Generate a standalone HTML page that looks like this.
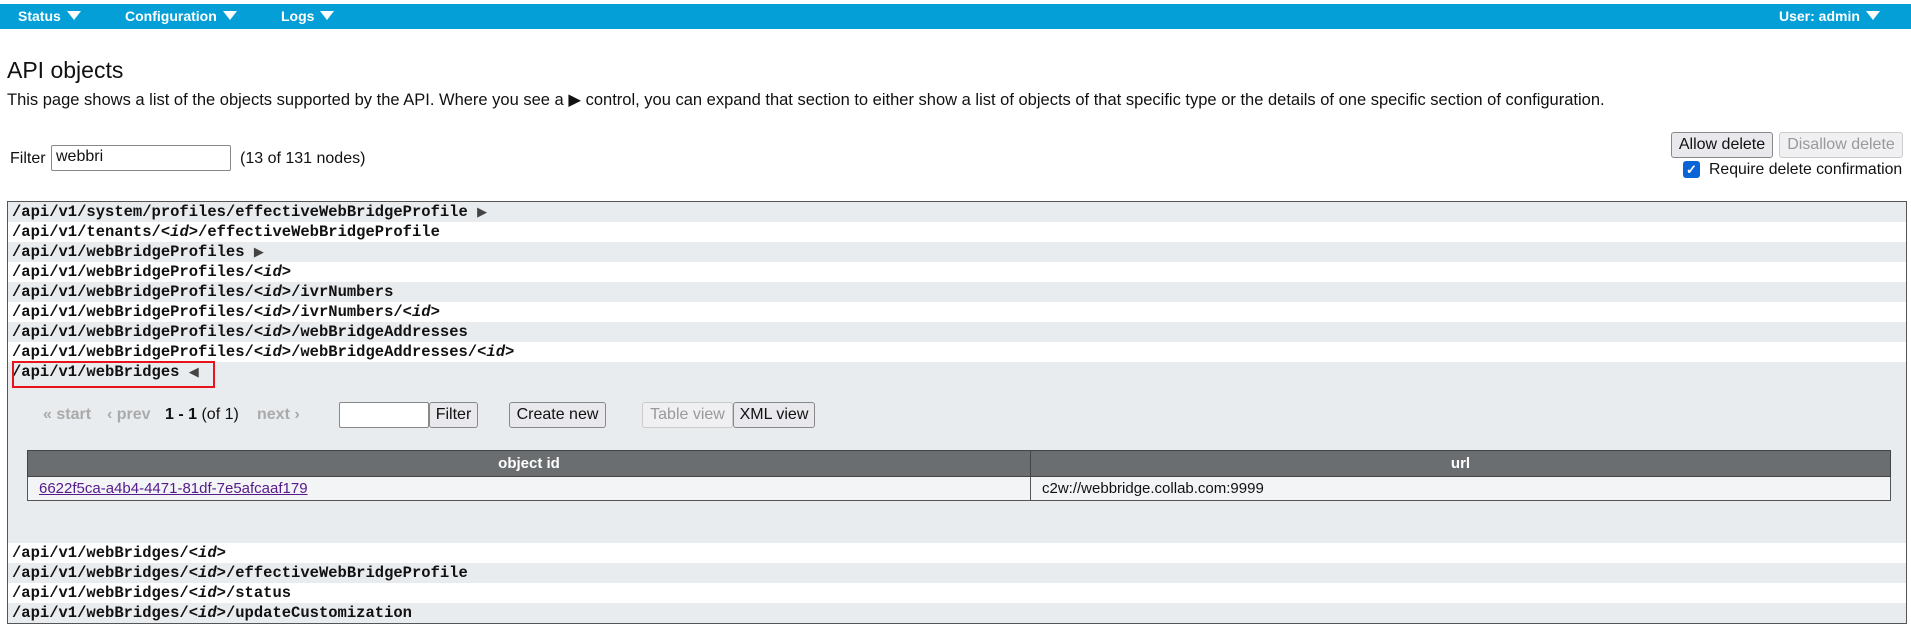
<!DOCTYPE html>
<html><head><meta charset="utf-8"><style>
*{margin:0;padding:0;box-sizing:border-box}
body{width:1911px;height:628px;background:#fff;font-family:"Liberation Sans",sans-serif;color:#111;position:relative;overflow:hidden}
.nav{position:absolute;left:0;top:4px;width:1911px;height:25px;background:#059fd8;color:#fff;font-weight:bold;font-size:14px}
.nav span{position:absolute;top:4px}
.tri{display:inline-block;width:0;height:0;border-left:7px solid transparent;border-right:7px solid transparent;border-top:9px solid #fff;margin-left:6px;vertical-align:1px}
.abs{position:absolute;white-space:nowrap}
h1{position:absolute;left:7px;top:57px;font-size:23px;font-weight:normal}
.desc{left:7px;top:90px;font-size:16.5px;letter-spacing:0px}
.btn{position:absolute;border:1px solid #888;border-radius:3px;background:#e9e9ed;font-size:16px;text-align:center;line-height:24px;color:#111}
.btn.dis{color:#999;border-color:#ccc;background:#f0f0f2}
.box{position:absolute;left:7px;top:201px;width:1900px;height:423px;border:1px solid #555;background:#fff;overflow:hidden}
.row{height:20px;font-family:"Liberation Mono",monospace;font-weight:bold;font-size:15.5px;line-height:20px;padding-left:4px;white-space:nowrap}
.ar{font-family:"DejaVu Sans",sans-serif;font-size:13px;color:#444;font-weight:normal}
.g{background:#e9ecee}
.w{background:#fff}
.pg{font-size:16px}
.grey{color:#aaa;font-weight:bold}
table{position:absolute;left:19px;top:88px;width:1864px;border-collapse:collapse;font-size:15px}
th{background:#6b6e70;color:#fff;height:26px;border:1px solid #444;font-weight:bold}
td{height:24px;border:1px solid #555;background:#f3f4f5;padding-left:11px}
a{color:#551a8b}
</style></head><body>
<div class="nav">
<span style="left:18px">Status<i class="tri"></i></span>
<span style="left:125px">Configuration<i class="tri"></i></span>
<span style="left:281px">Logs<i class="tri"></i></span>
<span style="left:1779px">User: admin<i class="tri"></i></span>
</div>
<h1>API objects</h1>
<div class="abs desc">This page shows a list of the objects supported by the API. Where you see a ▶ control, you can expand that section to either show a list of objects of that specific type or the details of one specific section of configuration.</div>
<div class="abs" style="left:10px;top:150px;font-size:16px">Filter</div>
<div class="abs" style="left:51px;top:145px;width:180px;height:26px;border:1px solid #888;border-radius:2px;font-size:16px;padding:2px 4px">webbri</div>
<div class="abs" style="left:240px;top:150px;font-size:16px">(13 of 131 nodes)</div>
<div class="btn" style="left:1671px;top:132px;width:102px;height:26px">Allow delete</div>
<div class="btn dis" style="left:1779px;top:132px;width:124px;height:26px">Disallow delete</div>
<div class="abs" style="left:1683px;top:161px;width:17px;height:17px;background:#0b63d8;border-radius:3px;color:#fff;font-size:13px;line-height:17px;text-align:center;font-weight:bold">✓</div>
<div class="abs" style="left:1709px;top:161px;font-size:15.8px">Require delete confirmation</div>
<div class="box">
<div class="row g">/api/v1/system/profiles/effectiveWebBridgeProfile <span class="ar">▶</span></div>
<div class="row w">/api/v1/tenants/&lt;<i>id</i>&gt;/effectiveWebBridgeProfile</div>
<div class="row g">/api/v1/webBridgeProfiles <span class="ar">▶</span></div>
<div class="row w">/api/v1/webBridgeProfiles/&lt;<i>id</i>&gt;</div>
<div class="row g">/api/v1/webBridgeProfiles/&lt;<i>id</i>&gt;/ivrNumbers</div>
<div class="row w">/api/v1/webBridgeProfiles/&lt;<i>id</i>&gt;/ivrNumbers/&lt;<i>id</i>&gt;</div>
<div class="row g">/api/v1/webBridgeProfiles/&lt;<i>id</i>&gt;/webBridgeAddresses</div>
<div class="row w">/api/v1/webBridgeProfiles/&lt;<i>id</i>&gt;/webBridgeAddresses/&lt;<i>id</i>&gt;</div>
<div class="g" style="height:181px;position:relative">
<div class="row" style="height:26px">/api/v1/webBridges <span class="ar">◀</span></div>
<div class="abs" style="left:4px;top:-1px;width:203px;height:27px;border:2px solid #e8141c"></div>
<div class="abs pg" style="left:35px;top:44px"><span class="grey">« start</span></div>
<div class="abs pg" style="left:99px;top:44px"><span class="grey">‹ prev</span></div>
<div class="abs pg" style="left:157px;top:44px"><b>1 - 1</b> (of 1)</div>
<div class="abs pg" style="left:249px;top:44px"><span class="grey">next ›</span></div>
<div class="abs" style="left:331px;top:40px;width:90px;height:26px;border:1px solid #888;background:#fff;border-radius:2px"></div>
<div class="btn" style="left:421px;top:40px;width:49px;height:26px">Filter</div>
<div class="btn" style="left:501px;top:40px;width:97px;height:26px">Create new</div>
<div class="btn dis" style="left:634px;top:40px;width:91px;height:26px">Table view</div>
<div class="btn" style="left:725px;top:40px;width:82px;height:26px">XML view</div>
<table><tr><th style="width:1003px">object id</th><th>url</th></tr>
<tr><td><a href="#">6622f5ca-a4b4-4471-81df-7e5afcaaf179</a></td><td>c2w://webbridge.collab.com:9999</td></tr></table>
</div>
<div class="row w">/api/v1/webBridges/&lt;<i>id</i>&gt;</div>
<div class="row g">/api/v1/webBridges/&lt;<i>id</i>&gt;/effectiveWebBridgeProfile</div>
<div class="row w">/api/v1/webBridges/&lt;<i>id</i>&gt;/status</div>
<div class="row g">/api/v1/webBridges/&lt;<i>id</i>&gt;/updateCustomization</div>
</div>
</body></html>
